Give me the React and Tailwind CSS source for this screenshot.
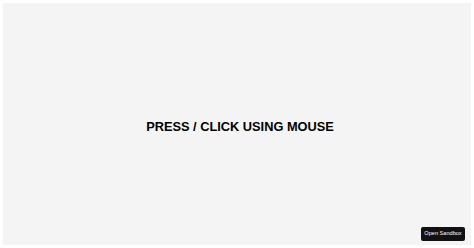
export default function App() {
  return (
    <div className="w-[474px] h-[248px] bg-white p-[3px]" style={{ fontFamily: '"Liberation Sans", Arial, sans-serif' }}>
      <div className="relative w-full h-full bg-[#f4f4f4] flex items-center justify-center">
        <h1 className="text-[12.8px] font-bold text-black leading-none pt-[6px] pl-[6px]">
          PRESS / CLICK USING MOUSE
        </h1>
        <button className="absolute right-[6px] bottom-[4px] w-[44px] h-[14px] bg-[#111111] text-white text-[5.6px] leading-none rounded-[2px] flex items-center justify-center">
          Open Sandbox
        </button>
      </div>
    </div>
  );
}
